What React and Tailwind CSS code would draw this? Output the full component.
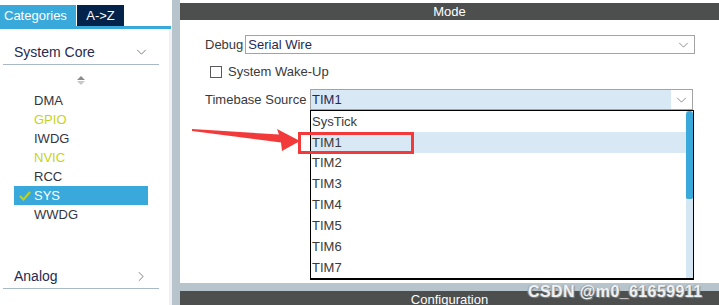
import React from 'react'

const font = { fontFamily: '"Liberation Sans", Arial, sans-serif' }

function Chevron({ dir = 'down', className = '' }) {
  const d = dir === 'down' ? 'M1 1l5 5 5-5' : 'M1 1l5 5-5 5'
  const vb = dir === 'down' ? '0 0 12 7' : '0 0 7 12'
  return (
    <svg viewBox={vb} className={className} fill="none" stroke="currentColor" strokeWidth="1.1" aria-hidden="true">
      <path d={d} />
    </svg>
  )
}

function Check() {
  return (
    <svg viewBox="0 0 12 10" className="h-[10px] w-[12px]" fill="none" stroke="#c3d20f" strokeWidth="2.2" aria-hidden="true">
      <path d="M1 5l3.5 3.5L11 1" />
    </svg>
  )
}

const peripherals = [
  { name: 'DMA' },
  { name: 'GPIO', warn: true },
  { name: 'IWDG' },
  { name: 'NVIC', warn: true },
  { name: 'RCC' },
  { name: 'SYS', selected: true },
  { name: 'WWDG' },
]

const timebase = ['SysTick', 'TIM1', 'TIM2', 'TIM3', 'TIM4', 'TIM5', 'TIM6', 'TIM7']

function LeftPanel() {
  return (
    <div className="flex w-[172px] shrink-0 flex-col bg-white">
      <div className="h-[5px]" />
      <div className="flex h-[21px] text-[13px] text-white">
        <div className="flex w-[76px] items-center bg-[#39a9dc] pl-[4px]">Categories</div>
        <div className="w-px" />
        <div className="flex w-[47px] items-center justify-center bg-[#03234b]">A-&gt;Z</div>
      </div>
      <div className="h-[3px] w-[171px] bg-[#39a9dc]" />
      <div className="flex flex-1">
        <div className="flex w-[169px] flex-col">
          <div className="ml-[3px] flex h-[36px] w-[156px] items-end justify-between border-b border-[#a9bac7] pb-[1px] pl-[11px] pr-[12px] text-[14px] text-[#262a52]">
            <span>System Core</span>
            <Chevron className="mb-[8px] h-[6px] w-[11px] text-[#7a7a7a]" />
          </div>
          <div className="flex h-[26px] flex-col items-center justify-center pr-[8px] pt-[4px]">
            <div className="h-0 w-0 border-x-[4px] border-b-[4px] border-x-transparent border-b-[#8c8c8c]" />
            <div className="mt-px h-0 w-0 border-x-[4px] border-t-[4px] border-x-transparent border-t-[#c8c8c8]" />
          </div>
          <div className="flex flex-col">
            {peripherals.map((p) => (
              <div
                key={p.name}
                className={`ml-[14px] flex h-[19px] w-[134px] items-center text-[13px] ${p.selected ? 'bg-[#39a9dc] text-white' : p.warn ? 'text-[#c5d31b]' : 'text-[#34343d]'}`}
              >
                <span className="flex w-[20px] justify-center pl-[2px]">{p.selected && <Check />}</span>
                {p.name}
              </div>
            ))}
          </div>
          <div className="flex-1" />
          <div className="mb-[16px] ml-[3px] flex h-[24px] w-[156px] items-center justify-between border-b border-[#a9bac7] pb-px pl-[11px] pr-[15px] text-[14px] text-[#262a52]">
            <span>Analog</span>
            <Chevron dir="right" className="h-[11px] w-[6px] text-[#7a7a7a]" />
          </div>
        </div>
        <div className="w-[3px] bg-[#eef0f2]" />
      </div>
    </div>
  )
}

function RightPanel() {
  return (
    <div className="flex flex-1 flex-col">
      <div className="h-[3px] bg-white" />
      <div className="flex h-[17px] items-center justify-center bg-[#4d4e4e] text-[13px] text-white">Mode</div>
      <div className="flex flex-1 flex-col bg-white pl-[25px] pt-[15px] text-[13px] text-[#3a3a3a]">
        <div className="flex h-[19px] items-center">
          <span className="mr-[2px]">Debug</span>
          <div className="flex h-[19px] w-[450px] items-center justify-between border border-[#a3a3a3] pl-[2px] pr-[5px] text-[#262a52]">
            <span>Serial Wire</span>
            <Chevron className="h-[6px] w-[11px] text-[#8a8a8a]" />
          </div>
        </div>
        <div className="mt-[12px] flex h-[12px] items-center">
          <div className="ml-[5px] h-[12px] w-[12px] border border-[#5b5b5b] bg-white" />
          <span className="ml-[6px]">System Wake-Up</span>
        </div>
        <div className="mt-[11px] flex h-[21px] items-center">
          <span className="w-[105px]">Timebase Source</span>
          <div className="flex h-[21px] w-[383px] items-center border border-[#a3a3a3] bg-[#d9e8f5] pl-px text-[#262a52]">
            <span className="flex-1">TIM1</span>
            <div className="flex h-full w-[21px] items-center justify-center bg-white">
              <Chevron className="h-[6px] w-[11px] text-[#8a8a8a]" />
            </div>
          </div>
        </div>
      </div>
      <div className="h-[8px] bg-[#b8c4cb]" />
      <div className="flex h-[14px] items-start justify-center overflow-hidden bg-[#4d4e4e] pt-[1px] text-[13px] leading-[16px] text-white">Configuration</div>
    </div>
  )
}

export default function App() {
  return (
    <div className="relative flex h-[305px] w-[719px] overflow-hidden bg-white" style={font}>
      <LeftPanel />
      <div className="w-[8px] shrink-0 bg-[#b8c4cb]" />
      <RightPanel />

      {/* open dropdown list */}
      <div className="absolute left-[310px] top-[110px] flex h-[170px] w-[384px] border border-b-2 border-black bg-white text-[13px] text-[#3a3a3a]">
        <div className="flex flex-1 flex-col">
          {timebase.map((t) => (
            <div key={t} className={`flex h-[21px] items-center pl-px ${t === 'TIM1' ? 'bg-[#d9e8f5]' : ''}`}>{t}</div>
          ))}
        </div>
        <div className="w-[7px] bg-[#d6e7f4]">
          <div className="h-[88px] rounded-t-[4px] rounded-b-[2px] bg-[#39a9dc]" />
        </div>
      </div>

      {/* annotation */}
      <div className="absolute left-[298px] top-[132px] h-[22px] w-[116px] border-[3px] border-[#f23a3a]" />
      <svg className="absolute left-0 top-0 h-[305px] w-[719px]" viewBox="0 0 719 305" aria-hidden="true">
        <polygon points="192,129 279,134.5 277,129 300,141 282,151 281,142.5 192,131" fill="#f23a3a" />
      </svg>

      <div
        className="absolute left-[528px] top-[280px] text-[16px] font-bold tracking-[0.4px] text-[#eef0f2]"
        style={{ textShadow: '1px 1px 1px #7d8589, -1px 0 1px #9aa2a6' }}
      >
        CSDN @m0_61659911
      </div>
    </div>
  )
}
